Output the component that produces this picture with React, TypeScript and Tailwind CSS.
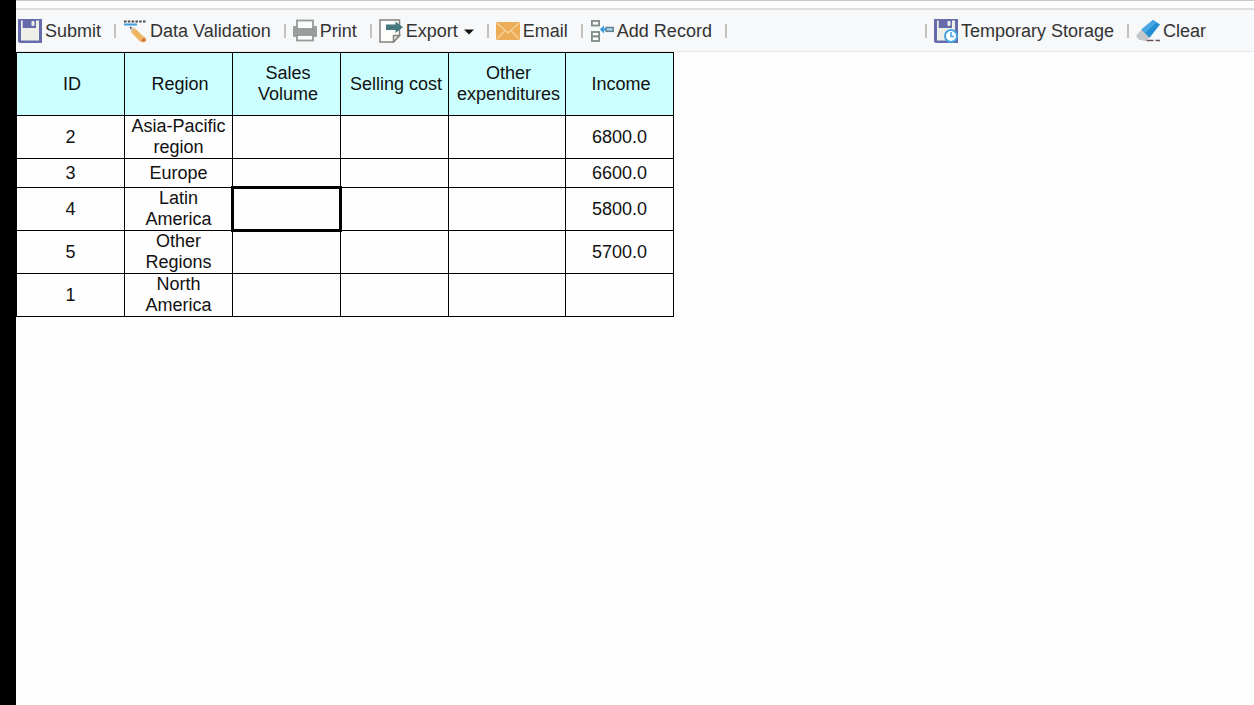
import { useState } from "react";
import type { ReactNode } from "react";

const columns = [
  { label: "ID", width: "w-[108px]" },
  { label: "Region", width: "w-[108px]" },
  { label: "Sales Volume", width: "w-[108px]" },
  { label: "Selling cost", width: "w-[108px]" },
  { label: "Other expenditures", width: "w-[117px]" },
  { label: "Income", width: "w-[108px]" },
];

const rows = [
  ["2", "Asia-Pacific region", "", "", "", "6800.0"],
  ["3", "Europe", "", "", "", "6600.0"],
  ["4", "Latin America", "", "", "", "5800.0"],
  ["5", "Other Regions", "", "", "", "5700.0"],
  ["1", "North America", "", "", "", ""],
];

function Icon({ children }: { children: ReactNode }) {
  return (
    <svg viewBox="0 0 24 24" className="size-6 shrink-0" aria-hidden="true">
      {children}
    </svg>
  );
}

function FloppyBody() {
  return (
    <>
      <path d="M0 0h24v24H1.5L0 22.5z" fill="#666bab" />
      <path d="M3 1.5h1.7V9H18V1.5h3V21.500H3z" fill="#eeefe9" />
      <rect x="13.500" y="2" width="3" height="5" rx="1.200" fill="#eeefe9" />
    </>
  );
}

function SubmitIcon() {
  return (
    <Icon>
      <FloppyBody />
    </Icon>
  );
}

function StorageIcon() {
  return (
    <Icon>
      <FloppyBody />
      <circle cx="17" cy="17" r="6" fill="#fff" stroke="#45a4e2" strokeWidth="2" />
      <path d="M17 13v4.500h3" fill="none" stroke="#45a4e2" strokeWidth="1.500" />
    </Icon>
  );
}

function ValidationIcon() {
  return (
    <Icon>
      <path d="M1 2.500h22" stroke="#4a4a4a" strokeWidth="2" strokeDasharray="2.500 1.300" />
      <path d="M1 5.500h13" stroke="#3d9fe0" strokeWidth="2" />
      <path d="M6.500 7.500l5 1.500-3.500 4z" fill="#c9c9c9" />
      <path d="M6.500 7.500l2.500.8-1.700 1.900z" fill="#5a5a5a" />
      <path d="M11.500 9l9.500 9-4 4.500L8 13z" fill="#eeb45f" />
      <path d="M21 17.500c2 1.500 2.800 3 2 4.500s-3.500 2-6 .3z" fill="#e8a04c" />
      <circle cx="20.500" cy="21" r="1.300" fill="#bb6a3e" />
    </Icon>
  );
}

function PrintIcon() {
  return (
    <Icon>
      <rect x="0" y="7" width="24" height="11" rx="1" fill="#9b9e9a" />
      <rect x="4" y="1.500" width="16" height="8.500" fill="#fdfdfd" stroke="#949c98" strokeWidth="1.800" />
      <rect x="4" y="16" width="16" height="5.500" fill="#fdfdfd" stroke="#949c98" strokeWidth="1.800" />
    </Icon>
  );
}

function ExportIcon() {
  return (
    <Icon>
      <path d="M1 1h19.500v15.500l-6 6.500H1z" fill="#fdfdfc" stroke="#85817b" strokeWidth="1.500" />
      <path d="M14.500 23v-6.500h6z" fill="#e8e6e1" stroke="#85817b" strokeWidth="1.500" />
      <path d="M7 5.500h9.500v-3l7.500 5.700-7.500 5.700v-3H7z" fill="#457b80" />
    </Icon>
  );
}

function EmailIcon() {
  return (
    <Icon>
      <rect x="0" y="3" width="24" height="18" rx="1" fill="#edac57" />
      <path d="M1 4l11 10L23 4M1 20l8-8.500M23 20l-8-8.500" fill="none" stroke="#f6d59c" strokeWidth="1.200" />
    </Icon>
  );
}

function AddRecordIcon() {
  return (
    <Icon>
      <g fill="#fdfdfd" stroke="#7e8b87" strokeWidth="1.800">
        <rect x="1.900" y="2" width="7.200" height="4.500" />
        <rect x="1.900" y="13" width="7.200" height="4.500" />
        <rect x="1.900" y="17.500" width="7.200" height="4.500" />
      </g>
      <rect x="16.200" y="8.500" width="7" height="3.800" fill="#a8daf5" stroke="#62818c" strokeWidth="1.500" />
      <path d="M9.800 10.400L14 6.200v3h2v2.400h-2v3z" fill="#3d9fe0" />
    </Icon>
  );
}

function ClearIcon() {
  return (
    <Icon>
      <path d="M5.500 10.500L0 16.500l2.500 4 6.500 1.500 5-3.500z" fill="#c5c7c9" />
      <path d="M17 1l7 4.500L13.500 18.700 5.500 10.500z" fill="#258fd3" />
      <path d="M17 1l3.500 2.200L9 14 5.500 10.500z" fill="#4aa8e2" />
      <path d="M10.500 21.500H24" stroke="#6b5050" strokeWidth="1.500" strokeDasharray="7 2 5" />
    </Icon>
  );
}

function Separator() {
  return <span className="mr-[7px] ml-[13px] h-3.5 w-0.5 shrink-0 bg-[#c3c1ba]" />;
}

function ToolButton({ icon, label, menu }: { icon: ReactNode; label: string; menu?: boolean }) {
  return (
    <button type="button" className="flex shrink-0 items-center gap-[3px] whitespace-nowrap" aria-haspopup={menu ? "menu" : undefined}>
      {icon}
      <span className="pt-0.5">{label}</span>
      {menu && (
        <svg viewBox="0 0 10 6" className="mt-0.5 ml-[3px] h-1.5 w-2.5" aria-hidden="true">
          <path d="M0 .5h10L5 5.500z" fill="#111" />
        </svg>
      )}
    </button>
  );
}

function Toolbar() {
  return (
    <div className="flex h-11 items-center border-t-2 border-b border-t-[#dedede] border-b-[#e6e8ea] bg-[#f6f8fa] pr-12 pl-0.5 text-[#333]" role="toolbar">
      <ToolButton icon={<SubmitIcon />} label="Submit" />
      <Separator />
      <ToolButton icon={<ValidationIcon />} label="Data Validation" />
      <Separator />
      <ToolButton icon={<PrintIcon />} label="Print" />
      <Separator />
      <ToolButton icon={<ExportIcon />} label="Export" menu />
      <Separator />
      <ToolButton icon={<EmailIcon />} label="Email" />
      <Separator />
      <ToolButton icon={<AddRecordIcon />} label="Add Record" />
      <Separator />
      <div className="ml-auto flex items-center">
        <Separator />
        <ToolButton icon={<StorageIcon />} label="Temporary Storage" />
        <Separator />
        <ToolButton icon={<ClearIcon />} label="Clear" />
      </div>
    </div>
  );
}

function ReportTable() {
  const [selected, setSelected] = useState("2-2");

  return (
    <table className="w-[658px] table-fixed border-collapse text-center text-[#111]">
      <colgroup>
        {columns.map((col) => (
          <col key={col.label} className={col.width} />
        ))}
      </colgroup>
      <thead>
        <tr className="h-[63px] bg-[#ccffff]">
          {columns.map((col) => (
            <th key={col.label} scope="col" className="border border-black py-0 pr-0 pl-[3px] font-normal">
              {col.label}
            </th>
          ))}
        </tr>
      </thead>
      <tbody>
        {rows.map((row, r) => (
          <tr key={row[0]} className="h-[29px]">
            {row.map((value, c) => {
              const id = `${r}-${c}`;
              return (
                <td key={id} onClick={() => setSelected(id)} className="relative border border-black p-0">
                  {value}
                  {id === selected && <span className="absolute -inset-0.5 border-3 border-black" />}
                </td>
              );
            })}
          </tr>
        ))}
      </tbody>
    </table>
  );
}

export default function App() {
  return (
    <div className="min-h-screen border-l-16 border-black bg-[#fefefe] font-['Liberation_Sans',Arial,sans-serif] text-[18px] leading-[21px]">
      <div className="h-2 border-t border-[#c8c8c8]" />
      <Toolbar />
      <ReportTable />
    </div>
  );
}
